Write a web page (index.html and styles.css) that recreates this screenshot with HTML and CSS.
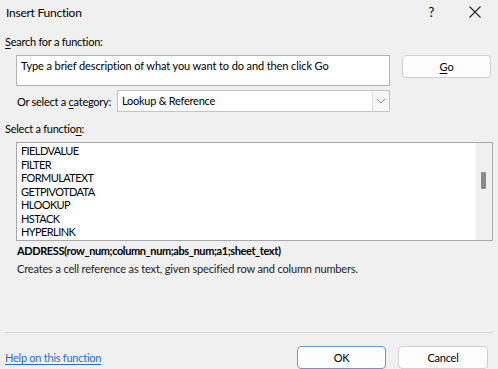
FILE: index.html
```html
<html>
	<head>
		<link rel="stylesheet" href="styles.css">
	</head>
	<body>
		<div class="titlebar">
			<span class="title">Insert Function</span>
			<span class="help">?</span>
			<svg class="close" width="12" height="12" viewBox="0 0 12 12"><path d="M0.5 0.5L11.5 11.5M11.5 0.5L0.5 11.5" stroke="#222" stroke-width="1.1" fill="none"/></svg>
		</div>
		<div class="content">
			<div class="label searchLbl"><u>S</u>earch for a function:</div>
			<div class="searchRow">
				<div class="searchBox">Type a brief description of what you want to do and then click Go</div>
				<div class="btn goBtn"><u>G</u>o</div>
			</div>
			<div class="categoryRow">
				<span class="label">Or select a <u>c</u>ategory:</span>
				<div class="select">
					<span class="selectText">Lookup &amp; Reference</span>
					<span class="arrow"><svg width="10" height="6" viewBox="0 0 10 6"><path d="M1 1L5 5L9 1" stroke="#888" stroke-width="1" fill="none"/></svg></span>
				</div>
			</div>
			<div class="label funcLbl">Select a functio<u>n</u>:</div>
			<div class="listBox">
				<div class="items">
					<div>FIELDVALUE</div>
					<div>FILTER</div>
					<div>FORMULATEXT</div>
					<div>GETPIVOTDATA</div>
					<div>HLOOKUP</div>
					<div>HSTACK</div>
					<div>HYPERLINK</div>
				</div>
				<div class="scrollbar"><div class="thumb"></div></div>
			</div>
			<div class="signature">ADDRESS(row_num;column_num;abs_num;a1;sheet_text)</div>
			<div class="desc">Creates a cell reference as text, given specified row and column numbers.</div>
			<div class="separator"></div>
			<div class="bottomRow">
				<a class="helpLink" href="#">Help on this function</a>
				<div class="btn okBtn">OK</div>
				<div class="btn cancelBtn">Cancel</div>
			</div>
		</div>
	</body>
</html>
```
FILE: styles.css
```css
body {
	margin: 0;
	background-color: #f0f0f0;
	font-family: Lato, "Noto Sans", sans-serif;
	font-size: 11px;
	letter-spacing: -0.25px;
	color: #000;
	width: 498px;
	height: 369px;
	overflow: hidden;
	white-space: nowrap;
}
.titlebar {
	height: 24px;
	display: flex;
	align-items: center;
	padding-left: 6px;
}
.title {
	font-size: 12px;
	flex: 1;
}
.help {
	font-size: 13px;
	margin-right: 35px;
}
.close {
	margin-right: 17px;
}
.content {
	padding: 0 5px;
}
.label u {
	text-decoration-thickness: 1px;
	text-underline-offset: 2px;
}
.searchLbl {
	margin-top: 10px;
	line-height: 16px;
}
.searchRow {
	display: flex;
	align-items: flex-start;
	margin-top: 5px;
	padding-left: 11px;
}
.searchBox {
	width: 364px;
	height: 29px;
	background-color: #fff;
	border: 1px solid #b4b4b4;
	padding: 0 4px;
	line-height: 20px;
	letter-spacing: -0.1px;
}
.btn {
	display: flex;
	align-items: center;
	justify-content: center;
	background-color: #fdfdfd;
	border: 1px solid #d0d0d0;
	border-radius: 4px;
	box-sizing: border-box;
}
.btn u {
	text-underline-offset: 2px;
}
.goBtn {
	width: 89px;
	height: 23px;
	margin-left: 12px;
}
.categoryRow {
	display: flex;
	align-items: center;
	margin-top: 4px;
	padding-left: 12px;
}
.categoryRow .label {
	width: 100px;
}
.select {
	display: flex;
	width: 273px;
	height: 22px;
	box-sizing: border-box;
	border: 1px solid #c4c4c4;
	background-color: #fff;
}
.selectText {
	flex: 1;
	padding-left: 4px;
	line-height: 20px;
}
.arrow {
	width: 16px;
	border-left: 1px solid #dcdcdc;
	background-color: #f7f7f7;
	display: flex;
	align-items: center;
	justify-content: center;
}
.funcLbl {
	margin-top: 9px;
	line-height: 16px;
}
.listBox {
	display: flex;
	margin-top: 5px;
	margin-left: 11px;
	width: 477px;
	height: 99px;
	box-sizing: border-box;
	border: 1px solid #a8a8a8;
	background-color: #fff;
}
.items {
	flex: 1;
	padding: 1px 0 0 4px;
	line-height: 13.5px;
	letter-spacing: -0.6px;
}
.scrollbar {
	width: 16px;
	background-color: #f0f0f0;
	position: relative;
}
.thumb {
	position: absolute;
	left: 5px;
	top: 29px;
	width: 5px;
	height: 17px;
	background-color: #8a8a8a;
	border-radius: 1px;
}
.signature {
	font-weight: bold;
	margin-top: 1px;
	padding-left: 12px;
	line-height: 18px;
	letter-spacing: -0.4px;
}
.desc {
	padding-left: 12px;
	line-height: 18px;
	color: #222;
	letter-spacing: -0.15px;
}
.separator {
	margin-top: 54px;
	width: 488px;
	border-top: 1px solid #dadada;
}
.bottomRow {
	display: flex;
	align-items: center;
	margin-top: 13px;
}
.helpLink {
	flex: 1;
	color: #2a6cc8;
	text-decoration: underline;
	text-underline-offset: 2px;
}
.okBtn {
	width: 89px;
	height: 23px;
	border-color: #5e9bd8;
}
.cancelBtn {
	width: 90px;
	height: 23px;
	margin-left: 12px;
	margin-right: 5px;
}
```
